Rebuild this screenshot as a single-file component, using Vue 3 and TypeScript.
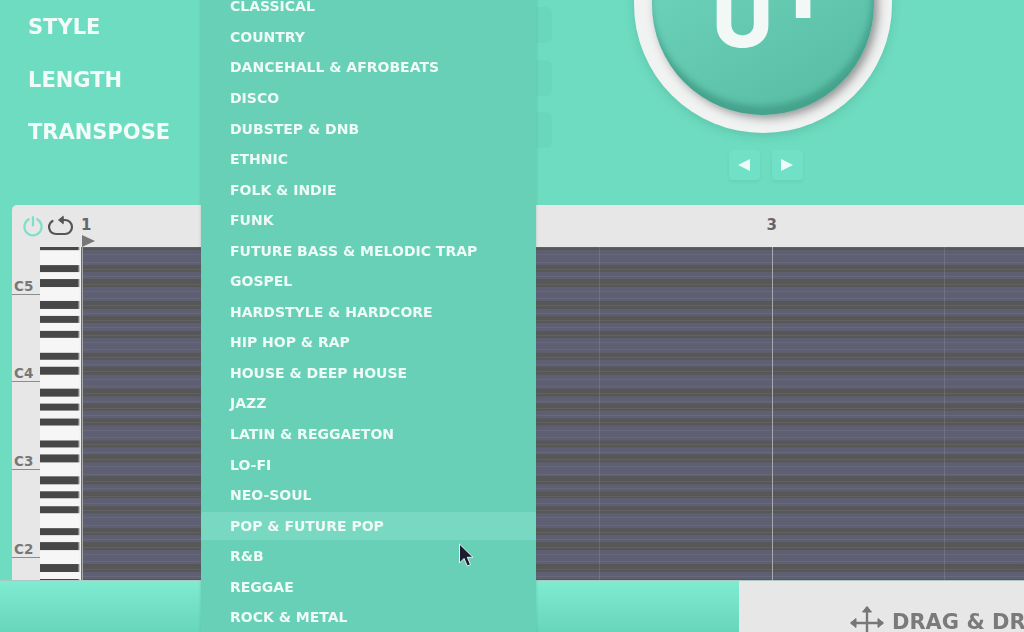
<template>
  <div class="app">
    <section class="top">
      <div class="controls">
        <div v-for="c in controls" :key="c" class="control">
          <span class="control-label">{{ c }}</span>
          <div class="select"></div>
        </div>
      </div>
      <div class="knob-col">
        <div class="knob-ring">
          <div class="knob">
            <span class="knob-text">U<span class="knob-sup">1</span></span>
          </div>
        </div>
        <div class="arrows">
          <button class="arrow"><span class="tri tri-left"></span></button>
          <button class="arrow"><span class="tri tri-right"></span></button>
        </div>
      </div>
    </section>

    <section class="roll">
      <header class="roll-head">
        <svg class="ico" width="22" height="22" viewBox="0 0 22 22" fill="none" stroke="#7fe0ca" stroke-width="2.200" stroke-linecap="round">
          <path d="M6.800 4.200a8.600 8.600 0 1 0 8.400 0" />
          <path d="M11 2v8.500" />
        </svg>
        <svg class="ico loop" width="26" height="22" viewBox="0 0 26 22" fill="none" stroke="#555" stroke-width="2.200" stroke-linecap="round">
          <path d="M13 5h4a7 7 0 0 1 0 14H8a7 7 0 0 1-3.500-13" />
          <path d="M15 1.500 10.500 5l4.500 3.500z" fill="#555" stroke-width="1" stroke-linejoin="round" />
        </svg>
        <span class="bar-num first">1</span>
        <span class="bar-num third">3</span>
        <span class="playhead"></span>
      </header>
      <div class="roll-body">
        <div class="notes">
          <div v-for="(n, i) in octaves" :key="n" class="note" :class="{ 'note-first': i === 0 }">{{ n }}</div>
        </div>
        <div class="keys"></div>
        <div class="grid"></div>
      </div>
    </section>

    <footer class="bottom">
      <div class="bottom-left"></div>
      <div class="drag">
        <svg width="38" height="38" viewBox="0 0 38 38" fill="none" stroke="#777" stroke-width="2.400">
          <path d="M19 3v32M3 19h32" />
          <path d="M14.500 8 19 2.500 23.500 8zM14.500 30 19 35.500 23.500 30zM8 14.500 2.500 19 8 23.500zM30 14.500 35.500 19 30 23.500z" fill="#777" stroke-width="1" stroke-linejoin="round" />
        </svg>
        <span class="drag-text">DRAG &amp; DROP</span>
      </div>
    </footer>

    <ul class="menu">
      <li v-for="s in styles" :key="s" class="menu-item" :class="{ hover: s === active }">{{ s }}</li>
    </ul>

    <svg class="cursor" width="18" height="26" viewBox="0 0 18 26">
      <path d="M1.500 1v19l4.500-4.500 3.300 7.500 3.200-1.400-3.200-7.300H15z" fill="#1c1c30" stroke="#e8f6f2" stroke-width="1" />
    </svg>
  </div>
</template>

<script setup lang="ts">
const controls: string[] = ['STYLE', 'LENGTH', 'TRANSPOSE']
const octaves: string[] = ['C5', 'C4', 'C3', 'C2']
const active = 'POP & FUTURE POP'
const styles: string[] = [
  'CLASSICAL',
  'COUNTRY',
  'DANCEHALL & AFROBEATS',
  'DISCO',
  'DUBSTEP & DNB',
  'ETHNIC',
  'FOLK & INDIE',
  'FUNK',
  'FUTURE BASS & MELODIC TRAP',
  'GOSPEL',
  'HARDSTYLE & HARDCORE',
  'HIP HOP & RAP',
  'HOUSE & DEEP HOUSE',
  'JAZZ',
  'LATIN & REGGAETON',
  'LO-FI',
  'NEO-SOUL',
  'POP & FUTURE POP',
  'R&B',
  'REGGAE',
  'ROCK & METAL',
]
</script>

<style>
html, body { margin: 0; background: #6fdcc0; }
</style>

<style scoped>
.app {
  position: relative;
  width: 1024px;
  height: 632px;
  overflow: hidden;
  background: #6edcc0;
  font-family: "DejaVu Sans", "Liberation Sans", sans-serif;
  font-weight: 700;
  display: flex;
  flex-direction: column;
}

/* top strip */
.top { height: 205px; display: flex; flex: none; }
.controls { width: 552px; flex: none; padding-left: 28px; box-sizing: border-box; padding-top: 1px; }
.control { height: 52.500px; display: flex; align-items: center; justify-content: space-between; }
.control-label { color: #f1fbf8; font-size: 21px; filter: blur(.4px); }
.select { width: 100px; height: 36px; margin-bottom: 4px; background: #69d7bc; border-radius: 6px; }

.knob-col { margin-left: 82px; margin-top: -125px; width: 258px; display: flex; flex-direction: column; align-items: center; }
.knob-ring {
  width: 258px; height: 258px; flex: none; border-radius: 50%;
  background: #f1f3f2;
  box-shadow: 0 3px 10px rgba(50,130,110,.25);
  display: flex; align-items: center; justify-content: center;
}
.knob {
  position: relative;
  width: 222px; height: 222px; border-radius: 50%;
  background: linear-gradient(150deg, #6ed4bb 20%, #5cc0a8 80%);
  box-shadow: inset -2px -9px 6px #46a28d, 4px 3px 10px rgba(50,50,50,.5);
}
.knob-text {
  position: absolute; left: 60px; bottom: 56px; white-space: nowrap;
  color: #f2f8f6; font-family: "Inter", sans-serif; font-weight: 800; font-size: 84px; line-height: 1;
  filter: blur(.4px);
}
.knob-sup { position: relative; top: -29px; margin-left: 5px; }

.arrows { display: flex; gap: 12px; margin-top: 17px; margin-left: 5px; }
.arrow {
  width: 31px; height: 30px; padding: 0; border: 0; border-radius: 4px;
  background: #70e0c6;
  box-shadow: 0 2px 3px rgba(70,170,145,.2);
  display: flex; align-items: center; justify-content: center;
}
.tri { width: 0; height: 0; border-top: 6px solid transparent; border-bottom: 6px solid transparent; }
.tri-left { border-right: 12px solid #eefaf7; }
.tri-right { border-left: 12px solid #eefaf7; }

/* piano roll */
.roll { margin-left: 12px; height: 375px; flex: none; display: flex; flex-direction: column; background: #e6e7e6; border-top-left-radius: 5px; overflow: hidden; }
.roll-head { position: relative; height: 42px; flex: none; display: flex; align-items: center; padding-left: 10px; }
.ico { flex: none; }
.loop { margin-left: 4px; }
.bar-num { color: #666; font-size: 15px; margin-bottom: 3px; }
.first { margin-left: 7px; }
.third { margin-left: 675px; }
.playhead { position: absolute; left: 70px; bottom: 0; width: 0; height: 0; border-left: 13px solid #777; border-top: 6.500px solid transparent; border-bottom: 6.500px solid transparent; }

.roll-body { flex: 1; display: flex; min-height: 0; }
.notes { width: 28px; flex: none; background: #e6e7e6; }
.note {
  box-sizing: border-box; height: 87.700px; display: flex; align-items: flex-end; padding: 0 0 0 2px;
  border-bottom: 1.500px solid #8d8d8d; color: #777; font-size: 13.500px; line-height: 16px;
}
.note-first { height: 47.500px; }
.keys {
  width: 41px; flex: none; filter: blur(.5px);
  background:
    linear-gradient(90deg, transparent 92%, #f2f2f2 98%),
    linear-gradient(180deg,
      #f6f6f6 0 8.33%, #474747 8.33% 16.66%, #f6f6f6 16.66% 25%, #474747 25% 33.33%, #f6f6f6 33.33% 41.66%,
      #474747 41.66% 50%, #f6f6f6 50% 66.66%, #474747 66.66% 75%, #f6f6f6 75% 83.33%, #474747 83.33% 91.66%, #f6f6f6 91.66%) 0 47px / 100% 87.700px;
}
.grid {
  flex: 1; border-left: 1px solid #3f8274; box-sizing: border-box; filter: blur(.35px);
  background:
    repeating-linear-gradient(90deg, #a9a9ad 0 1px, transparent 1px 345px),
    repeating-linear-gradient(90deg, rgba(160,160,170,.25) 0 1px, transparent 1px 172.500px),
    repeating-linear-gradient(180deg, rgba(170,170,175,.12) 0 1px, transparent 1px 7.310px),
    linear-gradient(180deg,
      #5e5f72 0 8.33%, #575757 8.33% 16.66%, #5e5f72 16.66% 25%, #575757 25% 33.33%, #5e5f72 33.33% 41.66%,
      #575757 41.66% 50%, #5e5f72 50% 66.66%, #575757 66.66% 75%, #5e5f72 75% 83.33%, #575757 83.33% 91.66%, #5e5f72 91.66%) 0 47px / 100% 87.700px;
}

/* bottom strip */
.bottom { flex: 1; display: flex; min-height: 0; border-top: 1px solid #a9c9c1; box-sizing: border-box; }
.bottom-left { width: 739px; flex: none; background: linear-gradient(180deg, #7fecd1, #68d6bb); }
.drag { flex: 1; background: #e6e7e6; display: flex; align-items: flex-start; padding: 23px 0 0 109px; gap: 6px; overflow: hidden; white-space: nowrap; }
.drag svg { flex: none; }
.drag-text { color: #7a7a7a; font-size: 21px; line-height: 36px; filter: blur(.3px); }

/* dropdown over everything */
.menu {
  position: absolute; left: 201px; top: -8.700px; width: 335px; margin: 0; padding: 0; list-style: none;
  background: #69d0b8; box-shadow: 0 0 3px rgba(60,130,110,.3);
}
.menu-item {
  height: 30.550px; line-height: 30.550px; padding-left: 29px; color: #eefaf6;
  font-size: 14px; filter: blur(.3px); white-space: nowrap;
}
.menu-item.hover { background: linear-gradient(#79d8c1, #79d8c1) 0 50% / 100% 28px no-repeat; }

.cursor { position: absolute; left: 458px; top: 543px; }
</style>
